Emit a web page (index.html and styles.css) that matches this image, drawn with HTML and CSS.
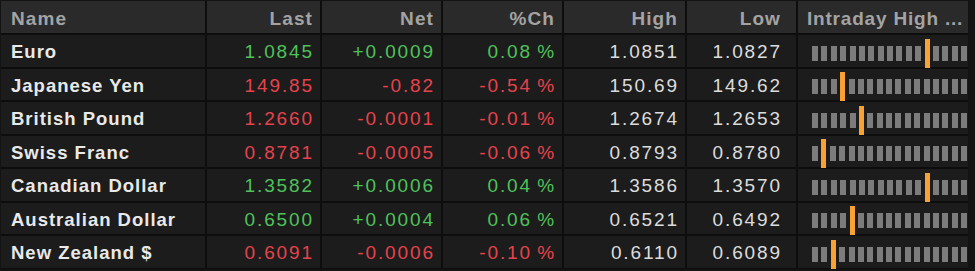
FILE: index.html
```html
<!DOCTYPE html>
<html lang="en">
<head>
<meta charset="utf-8">
<title>Currencies</title>
<link rel="stylesheet" href="styles.css">
</head>
<body>
<div class="quotes">
  <div class="row head">
    <div class="cell name">Name</div>
    <div class="cell num">Last</div>
    <div class="cell num">Net</div>
    <div class="cell num">%Ch</div>
    <div class="cell num">High</div>
    <div class="cell num low">Low</div>
    <div class="cell intraday">Intraday High ...</div>
  </div>

  <div class="row">
    <div class="cell name">Euro</div>
    <div class="cell num up">1.0845</div>
    <div class="cell num up">+0.0009</div>
    <div class="cell num up pct">0.08 %</div>
    <div class="cell num flat">1.0851</div>
    <div class="cell num flat low">1.0827</div>
    <div class="cell bar-cell"><div class="bar" data-mark="12"></div></div>
  </div>

  <div class="row">
    <div class="cell name">Japanese Yen</div>
    <div class="cell num down">149.85</div>
    <div class="cell num down">-0.82</div>
    <div class="cell num down pct">-0.54 %</div>
    <div class="cell num flat">150.69</div>
    <div class="cell num flat low">149.62</div>
    <div class="cell bar-cell"><div class="bar" data-mark="3"></div></div>
  </div>

  <div class="row">
    <div class="cell name">British Pound</div>
    <div class="cell num down">1.2660</div>
    <div class="cell num down">-0.0001</div>
    <div class="cell num down pct">-0.01 %</div>
    <div class="cell num flat">1.2674</div>
    <div class="cell num flat low">1.2653</div>
    <div class="cell bar-cell"><div class="bar" data-mark="5"></div></div>
  </div>

  <div class="row">
    <div class="cell name">Swiss Franc</div>
    <div class="cell num down">0.8781</div>
    <div class="cell num down">-0.0005</div>
    <div class="cell num down pct">-0.06 %</div>
    <div class="cell num flat">0.8793</div>
    <div class="cell num flat low">0.8780</div>
    <div class="cell bar-cell"><div class="bar" data-mark="1"></div></div>
  </div>

  <div class="row">
    <div class="cell name">Canadian Dollar</div>
    <div class="cell num up">1.3582</div>
    <div class="cell num up">+0.0006</div>
    <div class="cell num up pct">0.04 %</div>
    <div class="cell num flat">1.3586</div>
    <div class="cell num flat low">1.3570</div>
    <div class="cell bar-cell"><div class="bar" data-mark="12"></div></div>
  </div>

  <div class="row">
    <div class="cell name">Australian Dollar</div>
    <div class="cell num up">0.6500</div>
    <div class="cell num up">+0.0004</div>
    <div class="cell num up pct">0.06 %</div>
    <div class="cell num flat">0.6521</div>
    <div class="cell num flat low">0.6492</div>
    <div class="cell bar-cell"><div class="bar" data-mark="4"></div></div>
  </div>

  <div class="row">
    <div class="cell name">New Zealand $</div>
    <div class="cell num down">0.6091</div>
    <div class="cell num down">-0.0006</div>
    <div class="cell num down pct">-0.10 %</div>
    <div class="cell num flat">0.6110</div>
    <div class="cell num flat low">0.6089</div>
    <div class="cell bar-cell"><div class="bar" data-mark="2"></div></div>
  </div>
</div>
<script src="script.js"></script>
</body>
</html>
```

FILE: styles.css
```css
html, body {
  margin: 0;
  padding: 0;
  background: #131313;
}

body {
  font-family: "Liberation Sans", Arial, sans-serif;
}

.quotes {
  width: 967px;
  margin: 1px 0 0 1px;
  display: flex;
  flex-direction: column;
  gap: 2px;
  background: #0d0d0d;
  padding-bottom: 1px;
}

.row {
  display: grid;
  grid-template-columns: 204px 113px 119px 119px 121px 109px 170px;
  column-gap: 2px;
  height: 31.5px;
}

.row.head {
  height: 32px;
}

.cell {
  background: #1c1c1c;
  display: flex;
  align-items: center;
  white-space: nowrap;
  overflow: visible;
  box-sizing: border-box;
  padding-top: 3px;
}

.head .cell {
  background: #2a2a2a;
  color: #a3a3a3;
  font-weight: bold;
  font-size: 19px;
  letter-spacing: 1.1px;
}

.name {
  padding-left: 10px;
}

.row:not(.head) .name {
  color: #e9e9e9;
  font-weight: bold;
  font-size: 18.5px;
  letter-spacing: 1px;
}

.num {
  justify-content: flex-end;
  padding-right: 7px;
}

.row:not(.head) .num {
  font-size: 19px;
  letter-spacing: 1.9px;
  padding-right: 6px;
}

.head .num.low {
  padding-right: 15px;
}

.row:not(.head) .num.low {
  padding-right: 14px;
}

.pct {
  word-spacing: -2px;
}

.up {
  color: #4fc15b;
}

.down {
  color: #e5434c;
}

.flat {
  color: #dcdcdc;
}

.head .intraday {
  padding-left: 9px;
  letter-spacing: 0.8px;
}

.bar-cell {
  padding-left: 14px;
  padding-top: 5px;
}

.bar {
  width: 155px;
  height: 15px;
  display: flex;
  justify-content: space-between;
  align-items: center;
}

.seg {
  width: 6px;
  height: 15px;
  background: #7c7c7c;
}

.seg.mark {
  width: 5px;
  height: 29px;
  background: #f7a233;
  position: relative;
  z-index: 1;
}
```

FILE: script.js
```js
document.querySelectorAll('.bar').forEach(function (bar) {
  var mark = parseInt(bar.getAttribute('data-mark'), 10);
  for (var i = 0; i < 17; i++) {
    var s = document.createElement('span');
    s.className = i === mark ? 'seg mark' : 'seg';
    bar.appendChild(s);
  }
});
```
